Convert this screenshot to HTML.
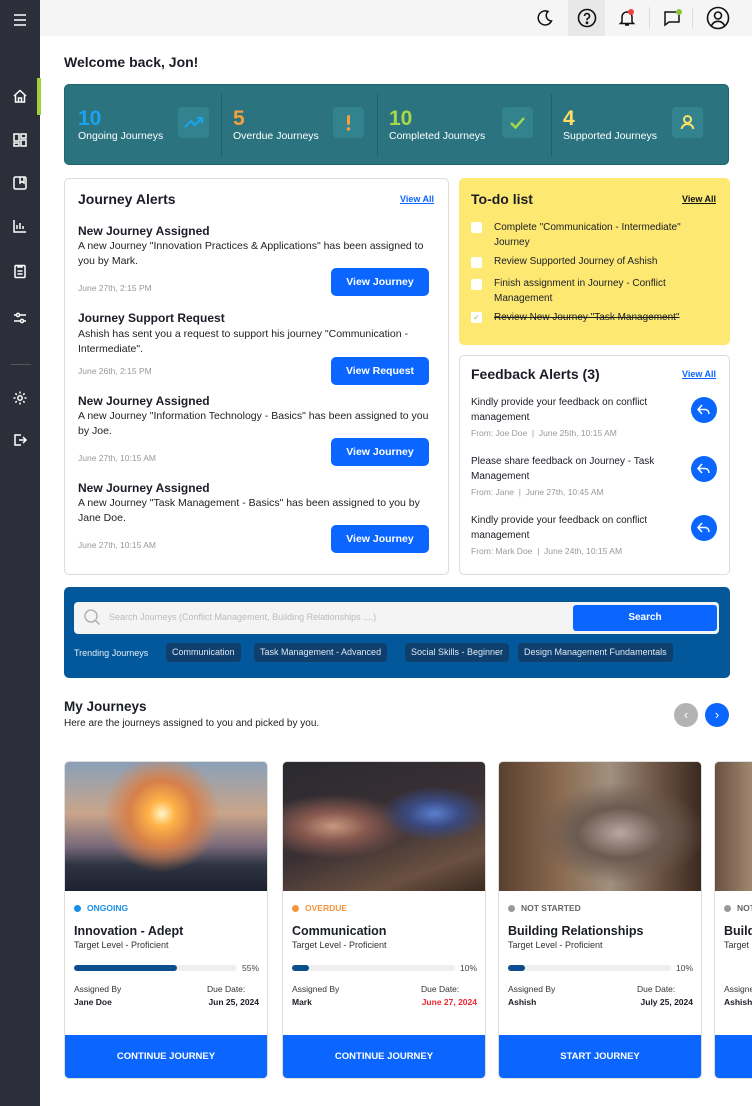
<!DOCTYPE html>
<html><head><meta charset="utf-8"><style>
*{box-sizing:border-box;margin:0;padding:0}
html,body{width:752px;height:1106px;overflow:hidden}
body{background:#fff;font-family:"Liberation Sans",sans-serif;color:#1b1d26;position:relative}
.a{position:absolute}
.sb{left:0;top:0;width:40px;height:1106px;background:#2c2f3a}
.sb svg{position:absolute;left:12px}
.top{left:40px;top:0;width:712px;height:36px;background:#f5f5f5}
.b{font-weight:bold}
.stat{top:84px;left:64px;width:665px;height:81px;background:#2a737f;border-radius:5px;border:1px solid #1f6570}
.num{font-size:21px;font-weight:bold;top:22px}
.lab{font-size:10.5px;color:#fff;top:45px}
.ib{width:31px;height:31px;background:#33838f;border-radius:4px;top:22px}
.card{border:1px solid #dcdcdc;border-radius:5px;background:#fff}
.h{font-size:14px;font-weight:bold}
.va{font-size:9px;font-weight:bold;color:#0a66ff;text-decoration:underline}
.t1{font-size:12px;font-weight:bold}
.t2{font-size:10.5px;line-height:15px;color:#222}
.dt{font-size:8.5px;color:#999}
.btn{background:#0a66ff;color:#fff;font-size:10.5px;font-weight:bold;border-radius:5px;width:98px;height:28px;text-align:center;line-height:28px}
.cb{width:11px;height:11px;background:#fff;border-radius:2px;left:471px}
.td{font-size:10px;line-height:14.5px;left:494px;width:220px}
.rep{width:26px;height:26px;border-radius:50%;background:#0a66ff;left:691px}
.chip{top:643px;height:19px;background:#0f3f6d;color:#dfe8f2;font-size:9px;line-height:19px;padding:0 6px;border-radius:4px}
.wrap{left:0;top:761px;width:752px;height:320px;overflow:hidden}
.jc{top:0;width:204px;height:318px;border:1px solid #ddd;border-radius:5px;overflow:hidden;background:#fff;white-space:nowrap}
.jc .img{position:absolute;left:0;top:0;width:100%;height:129px}
.st{position:absolute;left:9px;top:141px;font-size:8.5px;font-weight:bold}
.st i{display:inline-block;width:7px;height:7px;border-radius:50%;margin-right:6px;vertical-align:-1px}
.jt{position:absolute;left:9px;top:162px;font-size:12.5px;font-weight:bold}
.jl{position:absolute;left:9px;top:178px;font-size:9px;color:#333}
.pb{position:absolute;left:9px;top:203px;width:163px;height:6px;border-radius:3px;background:#efefef}
.pb b{display:block;height:6px;border-radius:3px;background:#0c4f8e}
.pc{position:absolute;right:8px;top:201px;font-size:8.5px;color:#444}
.k{position:absolute;top:222px;font-size:8.5px;color:#333}
.v{position:absolute;top:235px;font-size:8.5px;font-weight:bold}
.cj{position:absolute;left:0;bottom:0;width:100%;height:43px;background:#0a66ff;color:#fff;font-size:9.5px;font-weight:bold;text-align:center;line-height:43px}
</style></head><body>
<div class="a sb">
<svg style="top:12px" width="16" height="16" viewBox="0 0 16 16" stroke="#fff" stroke-width="1.6"><path d="M2 3h12M2 8h12M2 13h12"/></svg>
<div class="a" style="left:37px;top:78px;width:4px;height:37px;background:#9fd13b"></div>
<svg style="top:88px" width="16" height="16" viewBox="0 0 16 16" fill="none" stroke="#fff" stroke-width="1.5"><path d="M2 8L8 2.5 14 8M3.5 6.5V14h9V6.5M6.5 14v-4h3v4"/></svg>
<svg style="top:132px" width="16" height="16" viewBox="0 0 16 16" fill="none" stroke="#fff" stroke-width="1.5"><rect x="2" y="2" width="5" height="7"/><rect x="9" y="2" width="5" height="4"/><rect x="9" y="8" width="5" height="6"/><rect x="2" y="11" width="5" height="3"/></svg>
<svg style="top:175px" width="16" height="16" viewBox="0 0 16 16" fill="none" stroke="#fff" stroke-width="1.5"><rect x="2" y="2" width="12" height="12" rx="1.5"/><path d="M8 2v6l2-1.5L12 8V2"/></svg>
<svg style="top:218px" width="16" height="16" viewBox="0 0 16 16" fill="none" stroke="#fff" stroke-width="1.5"><path d="M2 2v12h12M5 11V7M8 11V5M11 11V8"/></svg>
<svg style="top:263px" width="16" height="16" viewBox="0 0 16 16" fill="none" stroke="#fff" stroke-width="1.5"><rect x="3" y="2.5" width="10" height="12" rx="1"/><path d="M6 2v2h4V2M5.5 8h5M5.5 11h5"/></svg>
<svg style="top:310px" width="16" height="16" viewBox="0 0 16 16" fill="none" stroke="#fff" stroke-width="1.5"><path d="M2 5h12M2 11h12"/><circle cx="6" cy="5" r="1.6" fill="#2c2f3a"/><circle cx="10" cy="11" r="1.6" fill="#2c2f3a"/></svg>
<div class="a" style="left:10px;top:364px;width:21px;height:1px;background:#555"></div>
<svg style="top:390px" width="16" height="16" viewBox="0 0 16 16" fill="none" stroke="#fff" stroke-width="1.5"><circle cx="8" cy="8" r="2.2"/><path d="M8 1.5v2M8 12.5v2M1.5 8h2M12.5 8h2M3.4 3.4l1.4 1.4M11.2 11.2l1.4 1.4M3.4 12.6l1.4-1.4M11.2 4.8l1.4-1.4"/></svg>
<svg style="top:432px" width="16" height="16" viewBox="0 0 16 16" fill="none" stroke="#fff" stroke-width="1.5"><path d="M9 3H3v10h6M7 8h7M11 5l3 3-3 3"/></svg>
</div>
<div class="a top">
<svg class="a" style="left:496px;top:9px" width="18" height="18" viewBox="0 0 18 18" fill="none" stroke="#111" stroke-width="1.5"><path d="M12 2.5A7 7 0 1 0 15.5 12 5.5 5.5 0 0 1 12 2.5z"/></svg>
<div class="a" style="left:528px;top:0;width:37px;height:36px;background:#e8e8e8"></div>
<svg class="a" style="left:537px;top:8px" width="20" height="20" viewBox="0 0 20 20" fill="none" stroke="#111" stroke-width="1.6"><circle cx="10" cy="10" r="8.5"/><path d="M7.5 8a2.5 2.5 0 1 1 3.5 2.3c-.7.3-1 .8-1 1.5v.5"/><circle cx="10" cy="14.8" r=".6" fill="#111"/></svg>
<svg class="a" style="left:578px;top:9px" width="18" height="18" viewBox="0 0 18 18" fill="none" stroke="#111" stroke-width="1.5"><path d="M4 13V8a5 5 0 0 1 10 0v5l1.5 1.5h-13zM7 16h4"/></svg>
<div class="a" style="left:588px;top:9px;width:6px;height:6px;border-radius:50%;background:#f04040"></div>
<div class="a" style="left:609px;top:7px;width:1px;height:22px;background:#ddd"></div>
<svg class="a" style="left:623px;top:9px" width="18" height="18" viewBox="0 0 18 18" fill="none" stroke="#111" stroke-width="1.5"><path d="M2 3h14v10H6l-4 3z"/></svg>
<div class="a" style="left:636px;top:9px;width:6px;height:6px;border-radius:50%;background:#8cc63f"></div>
<div class="a" style="left:652px;top:7px;width:1px;height:22px;background:#ddd"></div>
<svg class="a" style="left:666px;top:6px" width="24" height="24" viewBox="0 0 24 24" fill="none" stroke="#111" stroke-width="1.6"><circle cx="12" cy="12" r="10.5"/><circle cx="12" cy="9.5" r="3.5"/><path d="M5.5 19.5c1.5-3 4-4.2 6.5-4.2s5 1.2 6.5 4.2"/></svg>
</div>
<div class="a b" style="left:64px;top:54px;font-size:14px">Welcome back, Jon!</div>
<div class="a stat">
<div class="a num" style="left:13px;color:#1aa3f0">10</div><div class="a lab" style="left:13px">Ongoing Journeys</div>
<div class="a ib" style="left:113px"><svg width="31" height="31" viewBox="0 0 31 31" fill="none" stroke="#1aa3f0" stroke-width="2"><path d="M7 20l6-6 4 4 7-7M19 11h5v5"/></svg></div>
<div class="a" style="left:156px;top:9px;width:1px;height:62px;background:#1f5f69"></div>
<div class="a num" style="left:168px;color:#f5a03c">5</div><div class="a lab" style="left:168px">Overdue Journeys</div>
<div class="a ib" style="left:268px"><svg width="31" height="31" viewBox="0 0 31 31"><rect x="14" y="8" width="3" height="10" rx="1.5" fill="#f5a03c"/><circle cx="15.5" cy="22" r="1.7" fill="#f5a03c"/></svg></div>
<div class="a" style="left:312px;top:9px;width:1px;height:62px;background:#1f5f69"></div>
<div class="a num" style="left:324px;color:#a8d84a">10</div><div class="a lab" style="left:324px">Completed Journeys</div>
<div class="a ib" style="left:437px"><svg width="31" height="31" viewBox="0 0 31 31" fill="none" stroke="#a8d84a" stroke-width="2.4"><path d="M9 16l4.5 4.5L22 11"/></svg></div>
<div class="a" style="left:486px;top:9px;width:1px;height:62px;background:#1f5f69"></div>
<div class="a num" style="left:498px;color:#ffe066">4</div><div class="a lab" style="left:498px">Supported Journeys</div>
<div class="a ib" style="left:607px"><svg width="31" height="31" viewBox="0 0 31 31" fill="none" stroke="#ffe066" stroke-width="2"><circle cx="15.5" cy="12.5" r="3.5"/><path d="M9.5 22c1-3.5 3.5-5 6-5s5 1.5 6 5"/></svg></div>
</div>

<div class="a card" style="left:64px;top:178px;width:385px;height:397px"></div>
<div class="a h" style="left:78px;top:191px">Journey Alerts</div>
<div class="a va" style="left:400px;top:194px">View All</div>
<div class="a t1" style="left:78px;top:224px">New Journey Assigned</div>
<div class="a t2" style="left:78px;top:239px;width:362px">A new Journey "Innovation Practices &amp; Applications" has been assigned to you by Mark.</div>
<div class="a dt" style="left:78px;top:283px">June 27th, 2:15 PM</div>
<div class="a btn" style="left:331px;top:268px">View Journey</div>
<div class="a t1" style="left:78px;top:311px">Journey Support Request</div>
<div class="a t2" style="left:78px;top:327px;width:362px">Ashish has sent you a request to support his journey "Communication - Intermediate".</div>
<div class="a dt" style="left:78px;top:366px">June 26th, 2:15 PM</div>
<div class="a btn" style="left:331px;top:357px">View Request</div>
<div class="a t1" style="left:78px;top:394px">New Journey Assigned</div>
<div class="a t2" style="left:78px;top:409px;width:362px">A new Journey "Information Technology - Basics" has been assigned to you by Joe.</div>
<div class="a dt" style="left:78px;top:453px">June 27th, 10:15 AM</div>
<div class="a btn" style="left:331px;top:438px">View Journey</div>
<div class="a t1" style="left:78px;top:481px">New Journey Assigned</div>
<div class="a t2" style="left:78px;top:496px;width:362px">A new Journey "Task Management - Basics" has been assigned to you by Jane Doe.</div>
<div class="a dt" style="left:78px;top:540px">June 27th, 10:15 AM</div>
<div class="a btn" style="left:331px;top:525px">View Journey</div>

<div class="a" style="left:459px;top:178px;width:271px;height:167px;background:#fde872;border-radius:5px"></div>
<div class="a h" style="left:471px;top:191px">To-do list</div>
<div class="a va" style="left:682px;top:194px;color:#111">View All</div>
<div class="a cb" style="top:222px"></div><div class="a td" style="top:221px">Complete "Communication - Intermediate" Journey</div>
<div class="a cb" style="top:257px"></div><div class="a td" style="top:255px">Review Supported Journey of Ashish</div>
<div class="a cb" style="top:279px"></div><div class="a td" style="top:277px">Finish assignment in Journey - Conflict Management</div>
<div class="a cb" style="top:312px;font-size:8px;color:#8cc63f;text-align:center;line-height:11px">✓</div><div class="a td" style="top:311px;text-decoration:line-through">Review New Journey "Task Management"</div>

<div class="a card" style="left:459px;top:355px;width:271px;height:220px"></div>
<div class="a h" style="left:471px;top:366px">Feedback Alerts (3)</div>
<div class="a va" style="left:682px;top:369px">View All</div>
<div class="a td" style="left:471px;top:396px;width:210px">Kindly provide your feedback on conflict management</div>
<div class="a dt" style="left:471px;top:428px">From: Joe Doe &nbsp;|&nbsp; June 25th, 10:15 AM</div>
<div class="a td" style="left:471px;top:455px;width:190px">Please share feedback on Journey - Task Management</div>
<div class="a dt" style="left:471px;top:487px">From: Jane &nbsp;|&nbsp; June 27th, 10:45 AM</div>
<div class="a td" style="left:471px;top:514px;width:210px">Kindly provide your feedback on conflict management</div>
<div class="a dt" style="left:471px;top:546px">From: Mark Doe &nbsp;|&nbsp; June 24th, 10:15 AM</div>
<div class="a rep" style="top:397px"></div><div class="a rep" style="top:456px"></div><div class="a rep" style="top:515px"></div>
<svg class="a" style="left:691px;top:397px" width="26" height="144" viewBox="0 0 26 144" fill="none" stroke="#fff" stroke-width="1.5"><path id="r" d="M11 8l-4 4.5 4 4.5M7 12.5h7c2.5 0 4 2 4 4.5"/><use href="#r" y="59"/><use href="#r" y="118"/></svg>

<div class="a" style="left:64px;top:587px;width:666px;height:91px;background:#03579b;border-radius:5px"></div>
<div class="a" style="left:74px;top:602px;width:645px;height:32px;background:#f4f4f4;border-radius:4px"></div>
<svg class="a" style="left:83px;top:608px" width="18" height="18" viewBox="0 0 18 18" fill="none" stroke="#aaa" stroke-width="1.3"><circle cx="8" cy="8" r="6"/><path d="M12.5 12.5l4 4"/></svg>
<div class="a" style="left:109px;top:612px;font-size:9px;color:#bbb">Search Journeys (Conflict Management, Building Relationships ....)</div>
<div class="a" style="left:573px;top:605px;width:144px;height:26px;background:#0a66ff;border-radius:3px;color:#fff;font-size:10px;font-weight:bold;text-align:center;line-height:26px">Search</div>
<div class="a" style="left:74px;top:648px;font-size:9px;color:#e6eef6">Trending Journeys</div>
<div class="a chip" style="left:166px">Communication</div>
<div class="a chip" style="left:254px">Task Management - Advanced</div>
<div class="a chip" style="left:405px">Social Skills - Beginner</div>
<div class="a chip" style="left:518px">Design Management Fundamentals</div>

<div class="a b" style="left:64px;top:699px;font-size:13.5px">My Journeys</div>
<div class="a" style="left:64px;top:718px;font-size:10px;color:#222">Here are the journeys assigned to you and picked by you.</div>
<div class="a" style="left:674px;top:703px;width:24px;height:24px;border-radius:50%;background:#b3b3b3;color:#fff;text-align:center;line-height:23px;font-size:13px">‹</div>
<div class="a" style="left:705px;top:703px;width:24px;height:24px;border-radius:50%;background:#0a66ff;color:#fff;text-align:center;line-height:23px;font-size:13px">›</div>

<div class="a wrap">
<div class="a jc" style="left:64px">
<div class="img" style="background:radial-gradient(circle at 48% 40%,#fff6c8 0,#ffb347 10%,#d6804a 25%,transparent 45%),linear-gradient(#8aa0b8 0%,#c9a58a 40%,#7a6a7a 65%,#2e3442 80%,#1e2230 100%)"></div>
<div class="st" style="color:#1a8ee6"><i style="background:#1a8ee6"></i>ONGOING</div>
<div class="jt">Innovation - Adept</div><div class="jl">Target Level - Proficient</div>
<div class="pb"><b style="width:103px"></b></div><div class="pc">55%</div>
<div class="k" style="left:9px">Assigned By</div><div class="v" style="left:9px">Jane Doe</div>
<div class="k" style="left:142px">Due Date:</div><div class="v" style="right:8px">Jun 25, 2024</div>
<div class="cj">CONTINUE JOURNEY</div></div>

<div class="a jc" style="left:282px">
<div class="img" style="background:radial-gradient(ellipse at 75% 40%,#5a7fd0 0,#3a4a80 12%,transparent 25%),radial-gradient(ellipse at 25% 50%,#c89880 0,#8a5a50 15%,transparent 35%),linear-gradient(160deg,#2a2a30 0%,#3a3034 50%,#6a5040 80%,#3a2a22 100%)"></div>
<div class="st" style="color:#f5963c"><i style="background:#f5963c"></i>OVERDUE</div>
<div class="jt">Communication</div><div class="jl">Target Level - Proficient</div>
<div class="pb"><b style="width:17px"></b></div><div class="pc">10%</div>
<div class="k" style="left:9px">Assigned By</div><div class="v" style="left:9px">Mark</div>
<div class="k" style="left:138px">Due Date:</div><div class="v" style="right:8px;color:#f0262e">June 27, 2024</div>
<div class="cj">CONTINUE JOURNEY</div></div>

<div class="a jc" style="left:498px">
<div class="img" style="background:radial-gradient(ellipse at 60% 55%,#b8a8a0 0,#6a5a50 25%,transparent 50%),linear-gradient(90deg,#5a4030 0%,#8a6a50 30%,#a09080 55%,#6a5040 80%,#3a2a20 100%)"></div>
<div class="st" style="color:#666"><i style="background:#999"></i>NOT STARTED</div>
<div class="jt">Building Relationships</div><div class="jl">Target Level - Proficient</div>
<div class="pb"><b style="width:17px"></b></div><div class="pc">10%</div>
<div class="k" style="left:9px">Assigned By</div><div class="v" style="left:9px">Ashish</div>
<div class="k" style="left:138px">Due Date:</div><div class="v" style="right:8px">July 25, 2024</div>
<div class="cj">START JOURNEY</div></div>

<div class="a jc" style="left:714px;width:38px;border-right:none;border-radius:5px 0 0 5px">
<div class="img" style="background:linear-gradient(90deg,#6a5040,#a08870)"></div>
<div class="st" style="color:#666"><i style="background:#999"></i>NOT STARTED</div>
<div class="jt">Building Relationships</div><div class="jl">Target Level - Proficient</div>
<div class="k" style="left:9px">Assigned By</div><div class="v" style="left:9px">Ashish</div>
<div class="cj" style="text-align:left;padding-left:62px">START JOURNEY</div></div>
</div>
</body></html>
